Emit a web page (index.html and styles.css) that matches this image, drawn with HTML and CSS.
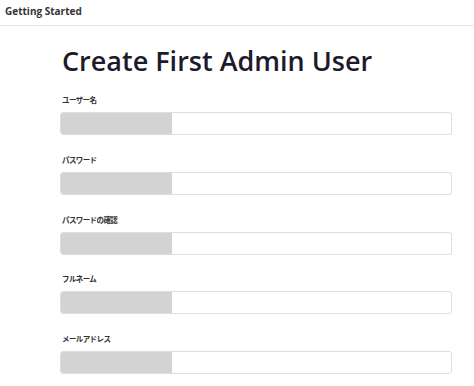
FILE: index.html
```html
<!DOCTYPE html>
<html lang="ja">
<head>
<meta charset="utf-8">
<title>Getting Started</title>
<link rel="stylesheet" href="styles.css">
</head>
<body>
<header class="topbar">Getting Started</header>
<main class="page">
  <h1 class="title">Create First Admin User</h1>
  <form class="form">
    <div class="field">
      <label class="label">ユーザー名</label>
      <div class="input"><div class="mask"></div></div>
    </div>
    <div class="field">
      <label class="label">パスワード</label>
      <div class="input"><div class="mask"></div></div>
    </div>
    <div class="field">
      <label class="label">パスワードの確認</label>
      <div class="input"><div class="mask"></div></div>
    </div>
    <div class="field">
      <label class="label">フルネーム</label>
      <div class="input"><div class="mask"></div></div>
    </div>
    <div class="field">
      <label class="label">メールアドレス</label>
      <div class="input"><div class="mask"></div></div>
    </div>
  </form>
</main>
</body>
</html>
```
FILE: styles.css
```css
html, body {
  margin: 0;
  padding: 0;
  background: #ffffff;
}
body {
  width: 474px;
  height: 386px;
  overflow: hidden;
  font-family: "Open Sans", "Noto Sans CJK JP", sans-serif;
  color: #333333;
}
.topbar {
  box-sizing: border-box;
  height: 26px;
  padding: 3px 0 0 5px;
  line-height: 16px;
  font-size: 10px;
  font-weight: 700;
  color: #333333;
  border-bottom: 1px solid #e8e8e8;
}
.page {
  padding: 0 0 0 60px;
  width: 392px;
}
.title {
  margin: 17px 0 0 2px;
  font-size: 27px;
  line-height: 36px;
  font-weight: 600;
  color: #1c1b2b;
  letter-spacing: 0;
}
.form {
  margin-top: 15px;
  display: flex;
  flex-direction: column;
  gap: 18.75px;
}
.field {
  display: flex;
  flex-direction: column;
}
.label {
  display: block;
  margin: 0 0 6px 2px;
  font-family: "Noto Sans CJK JP", sans-serif;
  font-size: 7.5px;
  line-height: 12px;
  font-weight: 700;
  letter-spacing: -0.6px;
  color: #333333;
}
.input {
  box-sizing: border-box;
  height: 23px;
  border: 1px solid #dedede;
  border-radius: 3px;
  background: #ffffff;
  overflow: hidden;
}
.mask {
  width: 111px;
  height: 100%;
  background: #d3d3d3;
}
```
